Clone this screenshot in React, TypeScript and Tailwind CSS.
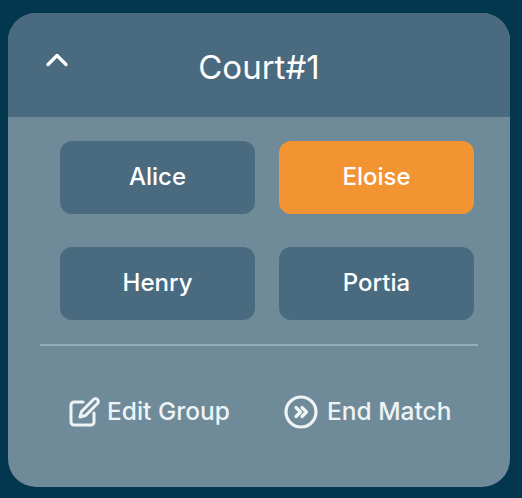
import { ChevronUp } from 'lucide-react'

function PlayerButton({ name, active }: { name: string; active?: boolean }) {
  return (
    <button
      type="button"
      className={`h-[73px] w-[195px] rounded-xl pb-[2px] text-[24px] font-[550] text-white ${
        active ? 'bg-[#f29431]' : 'bg-[#4a6b7f]'
      }`}
    >
      {name}
    </button>
  )
}

export default function App() {
  return (
    <div className="h-[498px] w-[522px] overflow-hidden bg-[#03374f] pt-[13px] pl-[8px] font-['Inter',sans-serif]">
      <div className="h-[474px] w-[502px] overflow-hidden rounded-[28px] bg-[#6f8b99]">
        {/* Header */}
        <div className="relative flex h-[104px] items-center justify-center bg-[#4a6b7f]">
          <ChevronUp className="absolute top-[29px] left-[31px] h-[36px] w-[36px] text-white" strokeWidth={2.2} />
          <h1 className="pt-[5px] text-[33px] font-normal text-white">Court#1</h1>
        </div>

        {/* Players */}
        <div className="mt-[24px] ml-[52px] grid w-[414px] grid-cols-2 gap-x-[24px] gap-y-[33px]">
          <PlayerButton name="Alice" />
          <PlayerButton name="Eloise" active />
          <PlayerButton name="Henry" />
          <PlayerButton name="Portia" />
        </div>

        <div className="mt-[24px] ml-[32px] h-[2px] w-[438px] bg-[#96adb8]" />

        {/* Actions */}
        <div className="mt-[47px] ml-[60px] flex items-center text-[24.5px] font-medium text-[#eef3f6]">
          <button type="button" className="flex items-center gap-[7px]">
            <svg width="32" height="32" viewBox="0 0 32 32" fill="none" stroke="#eef3f6" strokeWidth="3" strokeLinecap="round" strokeLinejoin="round">
              <path d="M15 6H6a3 3 0 0 0-3 3v17a3 3 0 0 0 3 3h17a3 3 0 0 0 3-3v-9" />
              <path d="M25.5 3.5a2.8 2.8 0 0 1 4 4L17.5 19.5 12 21l1.5-5.5z" />
            </svg>
            <span className="pb-[2px]">Edit Group</span>
          </button>
          <button type="button" className="ml-[54px] flex items-center gap-[9px]">
            <svg width="34" height="34" viewBox="0 0 34 34" fill="none" stroke="#eef3f6" strokeWidth="3.2" strokeLinecap="round" strokeLinejoin="round">
              <circle cx="17" cy="17" r="15" />
              <path d="M12 12.5l4.5 4.5-4.5 4.5" />
              <path d="M18 12.5l4.5 4.5-4.5 4.5" />
            </svg>
            <span className="pb-[2px]">End Match</span>
          </button>
        </div>
      </div>
    </div>
  )
}
